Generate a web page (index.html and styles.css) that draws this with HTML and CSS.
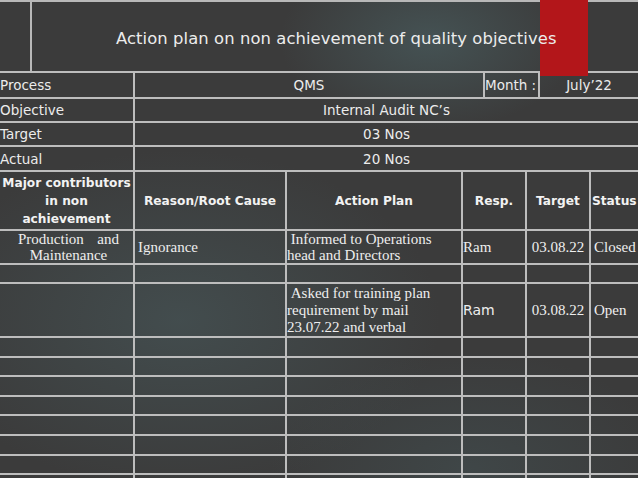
FILE: index.html
```html
<!DOCTYPE html>
<html>
<head>
<meta charset="utf-8">
<link rel="stylesheet" href="styles.css">
</head>
<body>
<div class="slide">
  <div class="accent"></div>
  <header class="title-bar">
    <div class="title-stub"></div>
    <h1 class="title">Action plan on non achievement of quality objectives</h1>
  </header>
  <table class="info">
    <colgroup><col class="c-label"><col class="c-value"><col class="c-month"><col class="c-monthval"></colgroup>
    <tr class="r-process">
      <td class="label">Process</td>
      <td class="center">QMS</td>
      <td class="label">Month :</td>
      <td class="center">July’22</td>
    </tr>
    <tr class="r-info"><td class="label">Objective</td><td class="center" colspan="3">Internal Audit NC’s</td></tr>
    <tr class="r-info"><td class="label">Target</td><td class="center" colspan="3">03 Nos</td></tr>
    <tr class="r-info"><td class="label">Actual</td><td class="center" colspan="3">20 Nos</td></tr>
  </table>
  <table class="plan">
    <colgroup><col class="p1"><col class="p2"><col class="p3"><col class="p4"><col class="p5"><col class="p6"></colgroup>
    <tr class="r-head">
      <th>Major contributors in non achievement</th>
      <th>Reason/Root Cause</th>
      <th>Action Plan</th>
      <th>Resp.</th>
      <th>Target</th>
      <th class="status">Status</th>
    </tr>
    <tr class="r-1">
      <td class="serif justify">Production and Maintenance</td>
      <td class="serif pad">Ignorance</td>
      <td class="serif">&nbsp;Informed to Operations head and Directors</td>
      <td class="serif">Ram</td>
      <td class="serif center">03.08.22</td>
      <td class="serif">Closed</td>
    </tr>
    <tr class="r-gap"><td></td><td></td><td></td><td></td><td></td><td></td></tr>
    <tr class="r-3">
      <td></td>
      <td></td>
      <td class="serif">&nbsp;Asked for training plan requirement by mail 23.07.22 and verbal</td>
      <td class="sans-data">Ram</td>
      <td class="serif center">03.08.22</td>
      <td class="serif">Open</td>
    </tr>
    <tr class="r-empty"><td></td><td></td><td></td><td></td><td></td><td></td></tr>
    <tr class="r-empty"><td></td><td></td><td></td><td></td><td></td><td></td></tr>
    <tr class="r-empty"><td></td><td></td><td></td><td></td><td></td><td></td></tr>
    <tr class="r-empty"><td></td><td></td><td></td><td></td><td></td><td></td></tr>
    <tr class="r-empty"><td></td><td></td><td></td><td></td><td></td><td></td></tr>
    <tr class="r-empty"><td></td><td></td><td></td><td></td><td></td><td></td></tr>
    <tr class="r-empty"><td></td><td></td><td></td><td></td><td></td><td></td></tr>
    <tr class="r-empty"><td></td><td></td><td></td><td></td><td></td><td></td></tr>
  </table>
</div>
</body>
</html>
```
FILE: styles.css
```css
* { box-sizing: border-box; }
html, body { margin: 0; padding: 0; }
body {
  width: 638px;
  height: 478px;
  overflow: hidden;
  background: #3a3a3a;
}
.slide {
  position: relative;
  width: 638px;
  height: 478px;
  overflow: hidden;
  background:
    radial-gradient(ellipse 150px 90px at 430px 40px, rgba(72, 90, 92, 0.75), rgba(72, 90, 92, 0) 100%),
    radial-gradient(ellipse 260px 170px at 180px 320px, rgba(70, 84, 86, 0.7), rgba(70, 84, 86, 0) 100%),
    radial-gradient(ellipse 200px 120px at 470px 470px, rgba(66, 78, 80, 0.6), rgba(66, 78, 80, 0) 100%),
    #3b3b3b;
  font-family: "DejaVu Sans", "Liberation Sans", sans-serif;
  color: #ececec;
}
.accent {
  position: absolute;
  left: 540px;
  top: 0;
  width: 48px;
  height: 76px;
  background: #b3161a;
  z-index: 2;
}
.title-bar {
  display: flex;
  height: 71px;
  border-top: 2px solid #b8b8b8;
}
.title-stub {
  width: 32px;
  border-right: 2px solid #b8b8b8;
}
.title {
  position: relative;
  z-index: 3;
  flex: 1;
  margin: 0;
  padding: 27px 0 0 84px;
  font-weight: normal;
  font-size: 16.4px;
  letter-spacing: 0.08px;
  line-height: 20px;
  color: #ececec;
  white-space: nowrap;
}
table {
  border-collapse: collapse;
  table-layout: fixed;
  width: 638px;
}
td, th {
  border: 2px solid #bdbdbd;
  padding: 0;
  overflow: hidden;
}
tr td:first-child, tr th:first-child { border-left: none; }
tr td:last-child, tr th:last-child { border-right: none; }
.info { position: relative; z-index: 1; }
.info tr:first-child td { border-top: 2px solid #bdbdbd; }
.info tr:last-child td { border-bottom: none; }
.c-label { width: 134px; }
.c-value { width: 350px; }
.c-month { width: 55px; }
.c-monthval { width: 99px; }
.info td {
  font-size: 13.5px;
  line-height: 16px;
  white-space: nowrap;
}
.r-process { height: 26px; }
.r-info { height: 24px; }
.label { text-align: left; }
.center { text-align: center; }
.p1 { width: 134px; }
.p2 { width: 152px; }
.p3 { width: 176px; }
.p4 { width: 64px; }
.p5 { width: 64px; }
.p6 { width: 48px; }
.plan th {
  font-weight: bold;
  font-size: 12.2px;
  line-height: 18px;
  text-align: center;
  color: #f2f2f2;
}
.plan th.status { text-align: left; padding-left: 1px; }
.r-head { height: 59px; }
.r-1 { height: 34px; }
.r-gap { height: 19px; }
.r-3 { height: 54px; }
.r-empty { height: 19.6px; }
.serif {
  font-family: "Liberation Serif", "Times New Roman", serif;
  font-size: 15px;
  line-height: 16px;
  color: #eeeeee;
  text-align: left;
  vertical-align: middle;
}
.serif.pad { padding-left: 3px; }
.serif.center { text-align: center; }
.serif.justify {
  text-align: justify;
  text-align-last: center;
  padding: 0 14px 0 18px;
}
.r-1 td.serif:last-child { padding-left: 3px; white-space: nowrap; }
.r-3 td.serif:last-child { padding-left: 3px; }
.r-3 td.serif:nth-child(3) { vertical-align: top; padding-top: 1px; line-height: 17px; }
.sans-data {
  font-family: "DejaVu Sans", "Liberation Sans", sans-serif;
  font-size: 14px;
  color: #eeeeee;
  vertical-align: middle;
}
```
